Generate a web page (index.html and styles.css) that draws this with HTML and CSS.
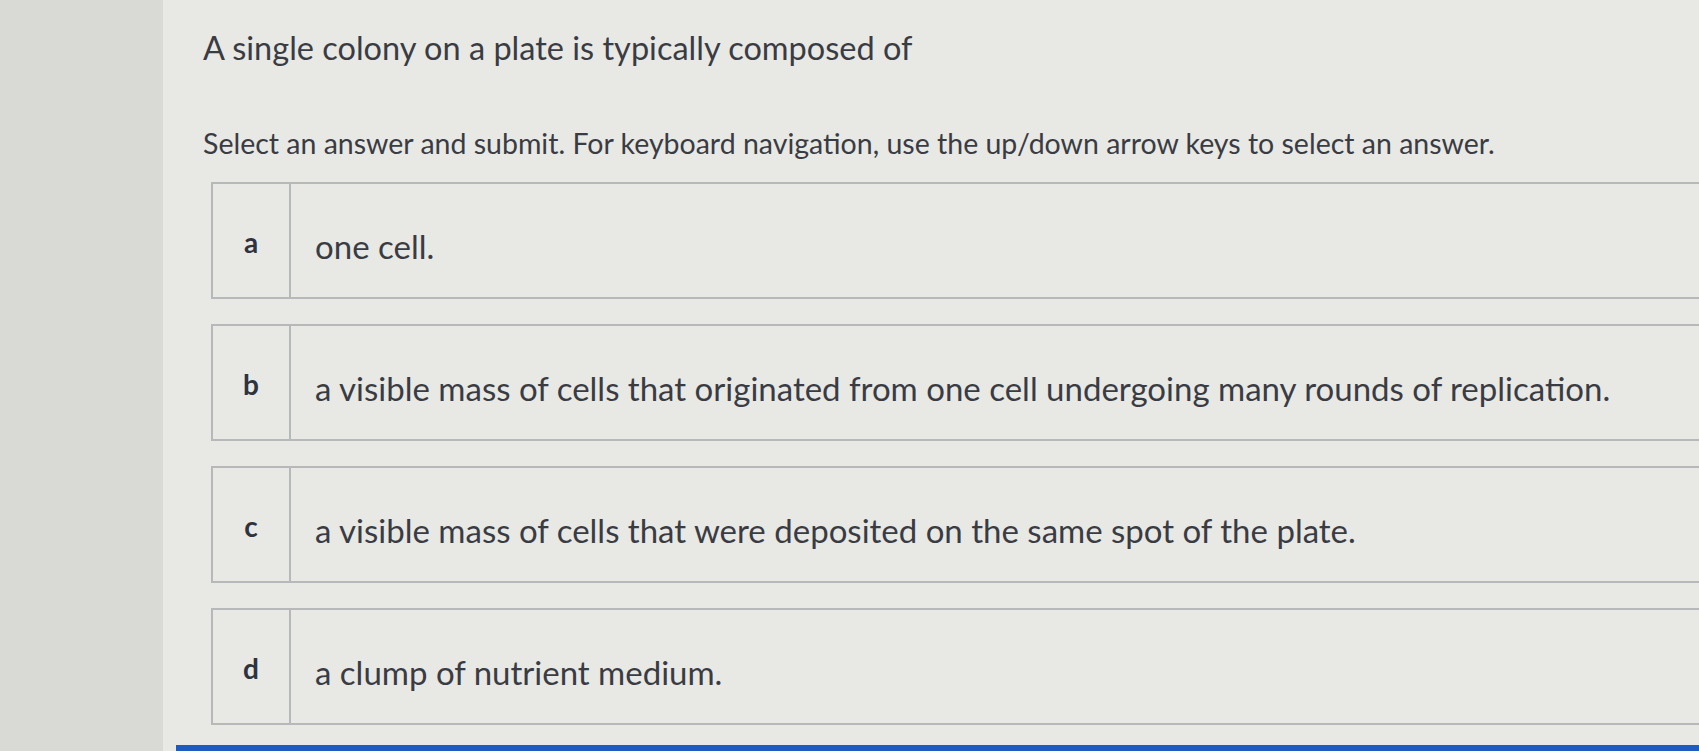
FILE: index.html
```html
<!DOCTYPE html>
<html lang="en">
  <head>
    <meta charset="UTF-8" />
    <meta name="viewport" content="width=device-width, initial-scale=1.0" />
    <title>Question</title>
    <link rel="stylesheet" href="styles.css">
  </head>

  <body>
    <div id="pageContainer">
      <div id="sideRail"></div>

      <div id="questionContainer">
        <h1 class="prompt">A single colony on a plate is typically composed of</h1>
        <p class="hint">
          Select an answer and submit. For keyboard navigation, use the up/down arrow keys to select an answer.
        </p>

        <ul class="choices">
          <li class="choice">
            <span class="choice-key">a</span>
            <span class="choice-text">one cell.</span>
          </li>
          <li class="choice">
            <span class="choice-key">b</span>
            <span class="choice-text">a visible mass of cells that originated from one cell undergoing many rounds of replication.</span>
          </li>
          <li class="choice">
            <span class="choice-key">c</span>
            <span class="choice-text">a visible mass of cells that were deposited on the same spot of the plate.</span>
          </li>
          <li class="choice">
            <span class="choice-key">d</span>
            <span class="choice-text">a clump of nutrient medium.</span>
          </li>
        </ul>

        <div class="submitBar"></div>
      </div>
    </div>
  </body>
</html>
```

FILE: styles.css
```css
html,
body {
  margin: 0;
  height: 100%;
}

body {
  font-family: Lato, "Liberation Sans", sans-serif;
  background-color: #e8e8e5;
  color: #3a3c43;
  overflow: hidden;
}

#pageContainer {
  display: flex;
  height: 100vh;
}

#sideRail {
  flex: 0 0 163px;
  background-color: #d9d9d6;
}

#questionContainer {
  flex: 1;
  display: flex;
  flex-direction: column;
  padding: 29px 0 0 40px;
  overflow: hidden;
}

.prompt {
  margin: 0;
  font-size: 32.5px;
  font-weight: 400;
  line-height: 38px;
}

.hint {
  margin: 59px 0 0 0;
  font-size: 28.5px;
  line-height: 34px;
}

.choices {
  list-style: none;
  margin: 22px -60px 0 8px;
  padding: 0;
  display: flex;
  flex-direction: column;
  gap: 25px;
}

.choice {
  display: flex;
  box-sizing: border-box;
  height: 117px;
  border: 2px solid #b6b8b9;
  border-right: none;
}

.choice-key {
  flex: 0 0 76px;
  display: flex;
  align-items: center;
  justify-content: center;
  padding-top: 3px;
  border-right: 2px solid #b6b8b9;
  font-size: 28px;
  font-weight: 700;
  color: #2f3340;
}

.choice-text {
  display: flex;
  align-items: center;
  padding: 10px 0 0 24px;
  font-size: 33px;
}

.submitBar {
  flex: 1 0 8px;
  margin: 20px 0 0 -27px;
  background-color: #1c5cc0;
}
```
